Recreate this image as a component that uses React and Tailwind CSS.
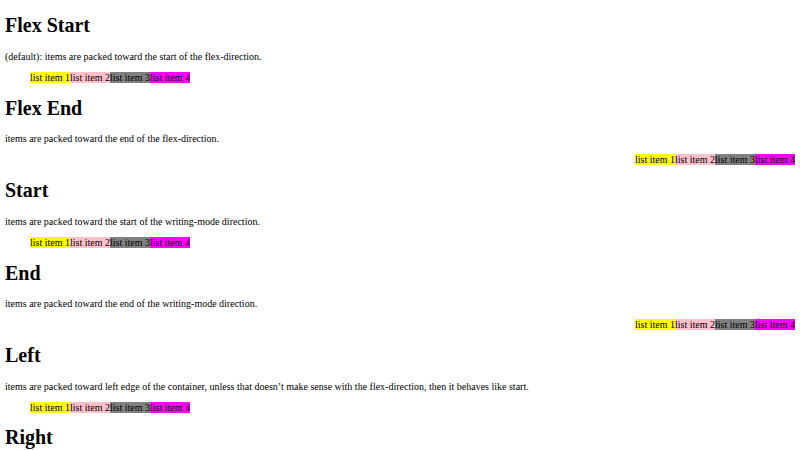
import React from "react";

const sections = [
  { title: "Flex Start", text: "(default): items are packed toward the start of the flex-direction.", end: false },
  { title: "Flex End", text: "items are packed toward the end of the flex-direction.", end: true },
  { title: "Start", text: "items are packed toward the start of the writing-mode direction.", end: false },
  { title: "End", text: "items are packed toward the end of the writing-mode direction.", end: true },
  { title: "Left", text: "items are packed toward left edge of the container, unless that doesn\u2019t make sense with the flex-direction, then it behaves like start.", end: false },
  { title: "Right", text: "items are packed toward right edge of the container, unless that doesn\u2019t make sense with the flex-direction, then it behaves like end.", end: true },
];

function Items({ end }) {
  return (
    <ul className={"flex list-none pl-[25px] my-[10px] text-[10px] leading-[normal] " + (end ? "justify-end" : "justify-start")}>
      <li className="bg-[#ffff00]">list item 1</li>
      <li className="bg-[#ffc0cb]">list item 2</li>
      <li className="bg-[#808080]">list item 3</li>
      <li className="bg-[#ff00ff]">list item 4</li>
    </ul>
  );
}

export default function App() {
  return (
    <div className="h-[450px] w-[800px] overflow-hidden bg-white text-black" style={{ fontFamily: '"Liberation Serif", "Times New Roman", serif' }}>
      <div className="px-[5px] pt-[0.7px]">
        {sections.map((s) => (
          <section key={s.title}>
            <h1 className="text-[20px] font-bold leading-[normal] my-[13.7px]">{s.title}</h1>
            <p className="text-[10px] leading-[normal] my-[10px]">{s.text}</p>
            <Items end={s.end} />
          </section>
        ))}
      </div>
    </div>
  );
}
